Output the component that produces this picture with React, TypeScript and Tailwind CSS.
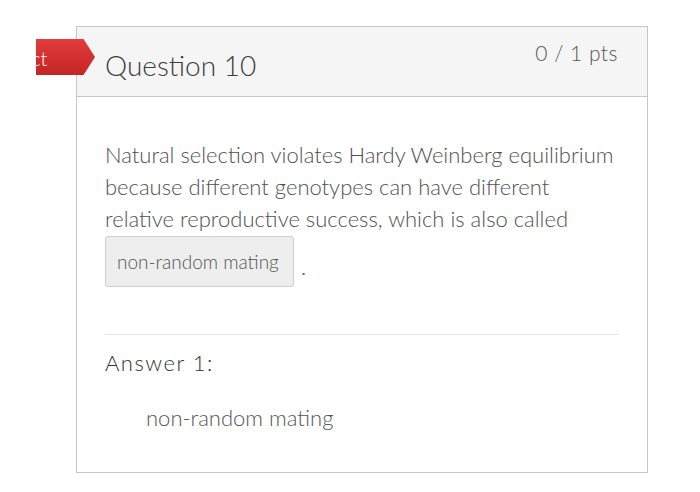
import React from "react";

export default function App() {
  return (
    <div className="w-[700px] h-[492px] bg-white relative overflow-hidden" style={{ fontFamily: "Lato, 'Open Sans', sans-serif" }}>
      <div className="absolute left-[76px] top-[26px] w-[572px] h-[447px] border border-[#c7c7c7] flex flex-col">
        <div className="h-[70px] bg-[#f5f5f5] border-b border-[#c7c7c7] flex justify-between pl-[28px] pr-[29px] shrink-0">
          <div className="text-[28px] text-[#3d3d3d] font-light mt-[19px] leading-[38px]">Question 10</div>
          <div className="text-[21px] text-[#555] font-light mt-[13px] leading-[26px] tracking-[0.5px]">0 / 1 pts</div>
        </div>
        <div className="px-[28px] pt-[42px] text-[22px] text-[#505050] font-light leading-[32px]">
          <p>Natural selection violates Hardy Weinberg equilibrium because different genotypes can have different relative reproductive success, which is also called</p>
          <div className="flex items-end mt-[1px]">
            <span className="inline-block h-[51px] w-[189px] bg-[#eeeeee] border border-[#cfcfcf] rounded-[3px] text-[19px] leading-[49px] px-[11px] text-[#555] whitespace-nowrap">non-random mating</span>
            <span className="ml-[7px] mb-[10px] leading-[20px]">.</span>
          </div>
          <div className="mt-[47px] border-t border-[#e5e5e5] w-[514px]"></div>
          <div className="mt-[12px] text-[22px] text-[#333] font-light tracking-[1.5px] leading-[32px]">Answer 1:</div>
          <div className="mt-[23px] ml-[41px] text-[22px] text-[#555] leading-[32px]">non-random mating</div>
        </div>
      </div>
      <div className="absolute left-[36px] top-[39px] h-[36px] w-[59px] flex items-center overflow-hidden">
        <div className="h-full w-[47px] bg-gradient-to-b from-[#e23c3c] to-[#c42424] flex items-center justify-start overflow-hidden shrink-0">
          <span className="text-white text-[20px] font-light whitespace-nowrap ml-[-5px] mt-[2px]">ct</span>
        </div>
        <svg width="12" height="36" viewBox="0 0 12 36" className="block shrink-0">
          <defs>
            <linearGradient id="g" x1="0" y1="0" x2="0" y2="1">
              <stop offset="0" stopColor="#e23c3c" />
              <stop offset="1" stopColor="#c42424" />
            </linearGradient>
          </defs>
          <polygon points="0,0 0,36 0.5,36 12,18 0.5,0" fill="url(#g)" />
        </svg>
      </div>
    </div>
  );
}
